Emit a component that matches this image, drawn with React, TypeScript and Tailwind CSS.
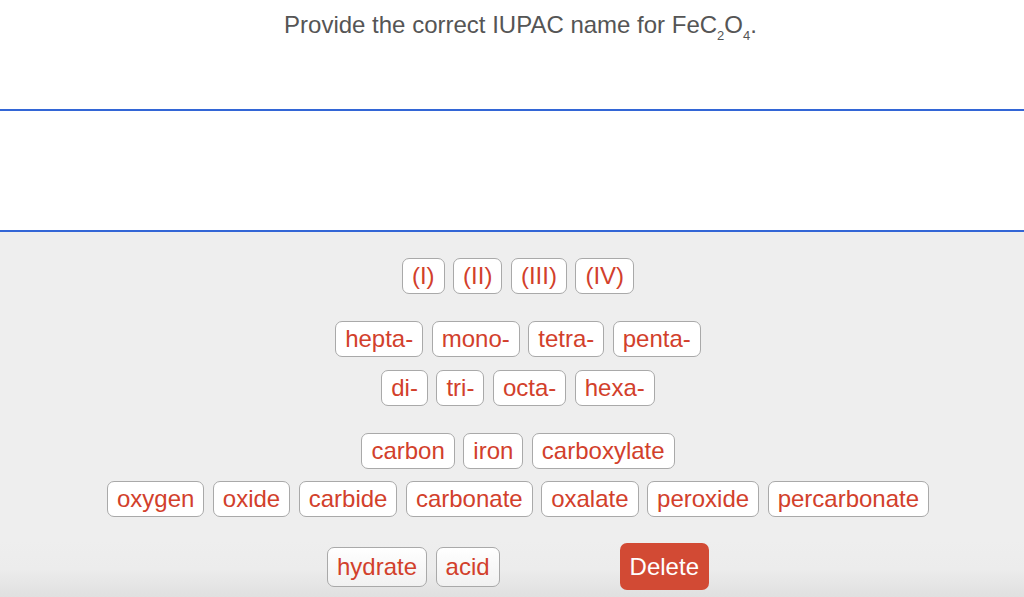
import React from 'react';

const font = { fontFamily: '"Liberation Sans", Arial, Helvetica, sans-serif' };

function Chip({ label, soft }: { label: string; soft?: boolean }) {
  return (
    <button
      className={`h-[36px] px-[9px] rounded-[7px] border border-[#a9a9a9] text-[24px] leading-[28px] text-[#d2402b] flex items-center ${
        soft ? 'bg-gradient-to-b from-white to-[#f1f1f1] h-[40px]' : 'bg-white'
      }`}
    >
      {label}
    </button>
  );
}

function Row({ items, className = '' }: { items: string[]; className?: string }) {
  return (
    <div className={`flex justify-center gap-[8.5px] ${className}`}>
      {items.map((t) => (
        <Chip key={t} label={t} />
      ))}
    </div>
  );
}

export default function App() {
  return (
    <div className="w-[1024px] h-[597px] overflow-hidden bg-white flex flex-col" style={font}>
      <div className="h-[109px] pt-[11px] pl-[17px] text-center text-[24px] leading-[28px] text-[#555555]">
        Provide the correct IUPAC name for FeC
        <sub className="text-[13px] relative top-[7px]">2</sub>O
        <sub className="text-[13px] relative top-[7px]">4</sub>.
      </div>
      <div className="h-[123px] border-t-[2px] border-b-[2px] border-[#3366d6] bg-white" />
      <div className="flex-1 bg-[#eeeeee] pl-[12px] flex flex-col">
        <Row items={['(I)', '(II)', '(III)', '(IV)']} className="mt-[26px]" />
        <Row items={['hepta-', 'mono-', 'tetra-', 'penta-']} className="mt-[27px]" />
        <Row items={['di-', 'tri-', 'octa-', 'hexa-']} className="mt-[13px]" />
        <Row items={['carbon', 'iron', 'carboxylate']} className="mt-[27px]" />
        <Row
          items={['oxygen', 'oxide', 'carbide', 'carbonate', 'oxalate', 'peroxide', 'percarbonate']}
          className="mt-[12px]"
        />
        <div className="flex-1 mt-[24px] -ml-[12px] pl-[12px] bg-gradient-to-b from-[#eeeeee] via-[#ececec] to-[#e0e0e0] flex justify-center items-start">
          <div className="flex items-center gap-[120px] mt-[2px]">
            <div className="flex gap-[8.5px]">
              <Chip label="hydrate" soft />
              <Chip label="acid" soft />
            </div>
            <button className="h-[47px] px-[10px] rounded-[7px] bg-[#d24a34] text-white text-[24px] leading-[28px]">
              Delete
            </button>
          </div>
        </div>
      </div>
    </div>
  );
}
